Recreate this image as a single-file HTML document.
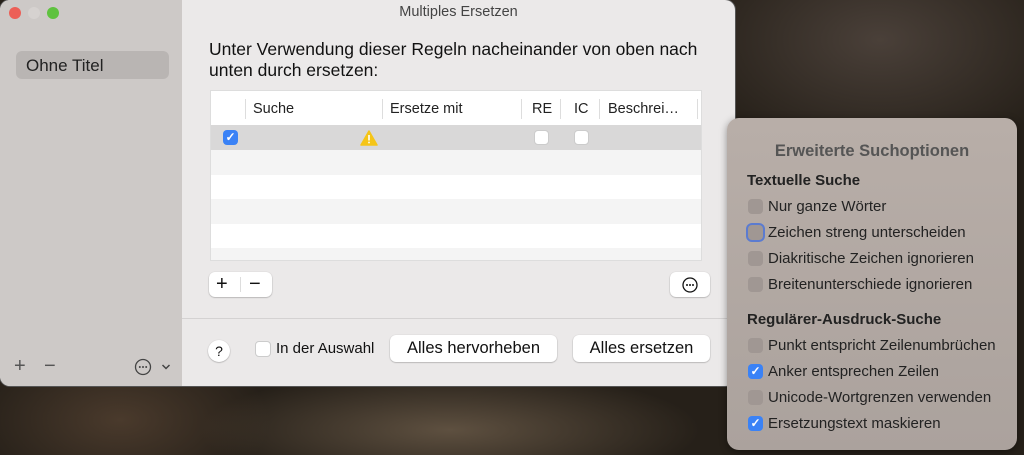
<!DOCTYPE html>
<html><head><meta charset="utf-8"><style>
*{box-sizing:border-box;margin:0;padding:0}
body{width:1024px;height:455px;overflow:hidden;position:relative;font-family:"Liberation Sans",sans-serif;
background:radial-gradient(ellipse 200px 120px at 880px 40px,#4a4039,transparent),radial-gradient(ellipse 250px 60px at 450px 430px,#5e5040,transparent),radial-gradient(ellipse 150px 80px at 120px 420px,#4a3a2c,transparent),#262019;}
.win{position:absolute;left:0;top:0;width:735px;height:386px;border-radius:10px;overflow:hidden;background:#ebe9e9;box-shadow:0 0 0 1px #555}
.side{position:absolute;left:0;top:0;width:182px;height:386px;background:#cdc9c7}
.dot{position:absolute;top:7px;width:12px;height:12px;border-radius:50%}
.abs{position:absolute}
.title{left:182px;right:0;top:4px;text-align:center;font-size:14.5px;color:#444}
.sel{left:16px;top:51px;width:153px;height:28px;background:#b9b5b3;border-radius:6px;font-size:17px;color:#222;padding:5px 10px}
.intro{left:209px;top:39px;font-size:17.5px;color:#111;line-height:21px}
.table{left:210px;top:90px;width:492px;height:171px;background:#fff;border:1px solid #ddd}
.hdr{font-size:14.5px;color:#222;top:10px}
.sep{top:8px;width:1px;height:20px;background:#ddd}
.row{left:0;width:490px;height:25px}
.cb{width:15px;height:15px;border-radius:4px;background:#fff;border:1px solid #ccc}
.cbon{background:#3a82f6;border:none;color:#fff;font-size:12px;text-align:center;line-height:15px;font-weight:bold}
.btn{background:#fff;border-radius:6px;box-shadow:0 0.5px 1.5px rgba(0,0,0,.35);font-size:16.5px;color:#111;text-align:center}
.pop{left:727px;top:118px;width:290px;height:332px;border-radius:12px;background:linear-gradient(#b8aea8,#aba29d);box-shadow:0 2px 8px rgba(0,0,0,.4)}
.pop .h{font-size:15px;font-weight:bold;color:#222}
.pop .it{font-size:15px;color:#222}
.pcb{position:absolute;left:21px;width:15px;height:15px;border-radius:4px;background:#a09793}
.pcb.on{background:#3a82f6;color:#fff;font-size:12px;text-align:center;line-height:15px;font-weight:bold}
</style></head><body>
<div class="win">
 <div class="side">
  <div class="dot" style="left:9px;background:#ec5f57"></div>
  <div class="dot" style="left:28px;background:#d6d2d0"></div>
  <div class="dot" style="left:47px;background:#5fc23f"></div>
  <div class="abs sel">Ohne Titel</div>
  <div class="abs" style="left:14px;top:355px;font-size:20px;color:#555">+</div>
  <div class="abs" style="left:44px;top:355px;font-size:20px;color:#555">−</div>
  <svg class="abs" style="left:134px;top:358px" width="18" height="18"><circle cx="9" cy="9" r="7.5" fill="none" stroke="#444" stroke-width="1.3"/><circle cx="5.8" cy="9" r="1" fill="#444"/><circle cx="9" cy="9" r="1" fill="#444"/><circle cx="12.2" cy="9" r="1" fill="#444"/></svg>
  <svg class="abs" style="left:161px;top:363px" width="10" height="8"><path d="M1.5 2l3.5 3.5 3.5-3.5" fill="none" stroke="#444" stroke-width="1.5"/></svg>
 </div>
 <div class="abs title">Multiples Ersetzen</div>
 <div class="abs intro">Unter Verwendung dieser Regeln nacheinander von oben nach<br>unten durch ersetzen:</div>
 <div class="abs table">
  <div class="abs sep" style="left:34px"></div><div class="abs hdr" style="left:42px">Suche</div>
  <div class="abs sep" style="left:171px"></div><div class="abs hdr" style="left:179px">Ersetze mit</div>
  <div class="abs sep" style="left:310px"></div><div class="abs hdr" style="left:321px">RE</div>
  <div class="abs sep" style="left:349px"></div><div class="abs hdr" style="left:363px">IC</div>
  <div class="abs sep" style="left:388px"></div><div class="abs hdr" style="left:397px">Beschrei…</div>
  <div class="abs sep" style="left:486px"></div>
  <div class="abs row" style="top:34px;background:#d9d8d8">
   <div class="abs cb cbon" style="left:12px;top:5px">✓</div>
   <svg class="abs" style="left:149px;top:5px" width="18" height="16"><path d="M9 1L17 15H1Z" fill="#f5c518" stroke="#f5c518" stroke-linejoin="round" stroke-width="1.5"/><rect x="8.2" y="5" width="1.6" height="5.5" fill="#fff"/><rect x="8.2" y="11.7" width="1.6" height="1.6" fill="#fff"/></svg>
   <div class="abs cb" style="left:323px;top:5px"></div>
   <div class="abs cb" style="left:363px;top:5px"></div>
  </div>
  <div class="abs row" style="top:59px;background:#f4f4f4"></div>
  <div class="abs row" style="top:108px;background:#f4f4f4"></div>
  <div class="abs row" style="top:157px;height:12px;background:#f4f4f4"></div>
 </div>
 <div class="abs btn" style="left:209px;top:272px;width:63px;height:25px"></div>
 <div class="abs" style="left:216px;top:273px;font-size:20px;color:#111">+</div>
 <div class="abs" style="left:240px;top:277px;width:1px;height:15px;background:#ddd"></div>
 <div class="abs" style="left:249px;top:273px;font-size:20px;color:#111">−</div>
 <div class="abs btn" style="left:670px;top:272px;width:40px;height:25px"></div>
 <svg class="abs" style="left:681px;top:276px" width="18" height="18"><circle cx="9" cy="9" r="7" fill="none" stroke="#111" stroke-width="1.3"/><circle cx="6" cy="9" r="1" fill="#111"/><circle cx="9" cy="9" r="1" fill="#111"/><circle cx="12" cy="9" r="1" fill="#111"/></svg>
 <div class="abs" style="left:182px;top:318px;width:553px;height:1px;background:#d4d2d2"></div>
 <div class="abs btn" style="left:208px;top:340px;width:22px;height:22px;border-radius:11px;font-size:14px;line-height:22px">?</div>
 <div class="abs cb" style="left:255px;top:341px;width:16px;height:16px"></div>
 <div class="abs" style="left:276px;top:340px;font-size:15px;color:#111">In der Auswahl</div>
 <div class="abs btn" style="left:390px;top:335px;width:167px;height:27px;line-height:27px">Alles hervorheben</div>
 <div class="abs btn" style="left:573px;top:335px;width:137px;height:27px;line-height:27px">Alles ersetzen</div>
</div>
<div class="abs pop">
 <div class="abs" style="left:0;right:0;top:24px;text-align:center;font-size:16.5px;font-weight:bold;color:#555">Erweiterte Suchoptionen</div>
 <div class="abs h" style="left:20px;top:54px">Textuelle Suche</div>
 <div class="pcb" style="top:81px"></div><div class="abs it" style="left:41px;top:80px">Nur ganze Wörter</div>
 <div class="pcb" style="top:107px;box-shadow:0 0 0 2px #5b7bd0"></div><div class="abs it" style="left:41px;top:106px">Zeichen streng unterscheiden</div>
 <div class="pcb" style="top:133px"></div><div class="abs it" style="left:41px;top:132px">Diakritische Zeichen ignorieren</div>
 <div class="pcb" style="top:159px"></div><div class="abs it" style="left:41px;top:158px">Breitenunterschiede ignorieren</div>
 <div class="abs h" style="left:20px;top:193px">Regulärer-Ausdruck-Suche</div>
 <div class="pcb" style="top:220px"></div><div class="abs it" style="left:41px;top:219px">Punkt entspricht Zeilenumbrüchen</div>
 <div class="pcb on" style="top:246px">✓</div><div class="abs it" style="left:41px;top:245px">Anker entsprechen Zeilen</div>
 <div class="pcb" style="top:272px"></div><div class="abs it" style="left:41px;top:271px">Unicode-Wortgrenzen verwenden</div>
 <div class="pcb on" style="top:298px">✓</div><div class="abs it" style="left:41px;top:297px">Ersetzungstext maskieren</div>
</div>
</body></html>
